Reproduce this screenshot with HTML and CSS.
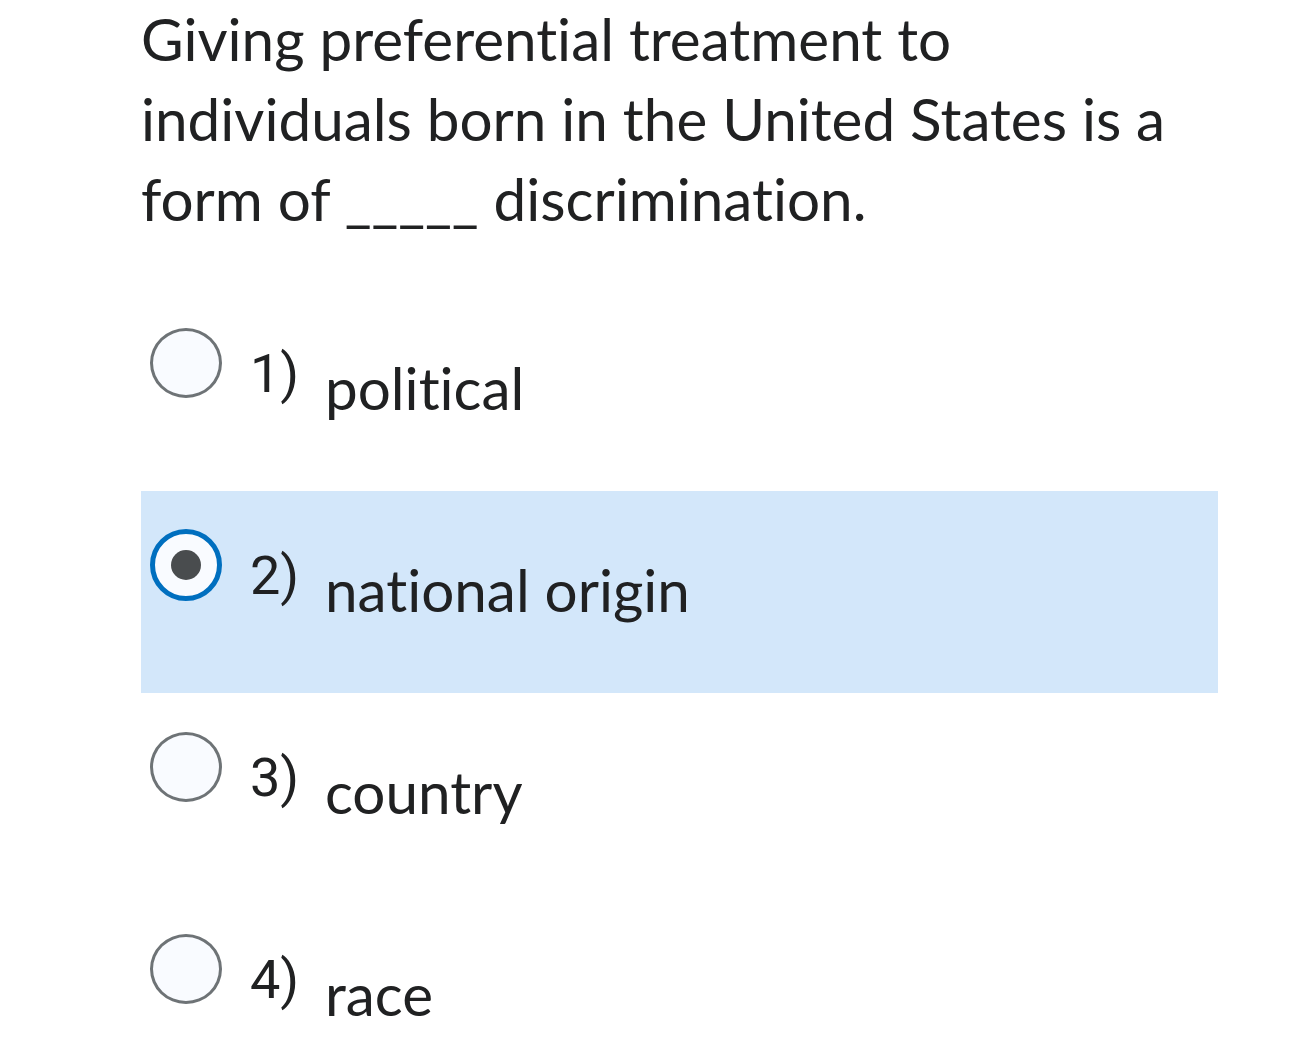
FILE: index.html
```html
<!DOCTYPE html>
<html lang="en">
<head>
<meta charset="utf-8">
<title>Question</title>
<link rel="stylesheet" href="styles.css">
</head>
<body>
<main class="quiz">
  <p class="question">Giving preferential treatment to individuals born in the United States is a form of _____ discrimination.</p>
  <div class="options">
    <label class="option">
      <span class="radio"></span>
      <span class="num">1)</span>
      <span class="answer">political</span>
    </label>
    <label class="option selected">
      <span class="radio"><span class="dot"></span></span>
      <span class="num">2)</span>
      <span class="answer">national origin</span>
    </label>
    <label class="option">
      <span class="radio"></span>
      <span class="num">3)</span>
      <span class="answer">country</span>
    </label>
    <label class="option">
      <span class="radio"></span>
      <span class="num">4)</span>
      <span class="answer">race</span>
    </label>
  </div>
</main>
</body>
</html>
```
FILE: styles.css
```css
html, body {
  margin: 0;
  padding: 0;
  background: #ffffff;
}

body {
  color: #202122;
  font-family: "Lato", "Noto Sans", sans-serif;
  font-variant-ligatures: none;
  font-feature-settings: "liga" 0, "clig" 0;
  overflow: hidden;
}

.quiz {
  margin-left: 141px;
  width: 1077px;
}

.question {
  margin: -2px 0 0 0;
  font-size: 58.4px;
  line-height: 80px;
  width: 1060px;
}

.options {
  margin-top: 51px;
  display: flex;
  flex-direction: column;
}

.option {
  display: flex;
  align-items: flex-start;
  height: 202px;
  box-sizing: border-box;
  padding-top: 39px;
  padding-left: 9px;
}

.option.selected {
  background: #d3e7fa;
}

.radio {
  flex: none;
  width: 72px;
  height: 70px;
  box-sizing: border-box;
  border: 3px solid #6e7376;
  border-radius: 50%;
  background: #f9fbff;
  display: flex;
  align-items: center;
  justify-content: center;
}

.selected .radio {
  border: 5px solid #006fbf;
  height: 72px;
  margin-top: -1px;
}

.dot {
  width: 30px;
  height: 30px;
  border-radius: 50%;
  background: #494c4e;
}

.num {
  flex: none;
  margin-left: 28px;
  margin-top: 16px;
  font-family: "Roboto", "Liberation Sans", sans-serif;
  font-size: 54px;
  line-height: 60px;
  width: 75px;
}

.answer {
  margin-top: 19px;
  font-size: 58.4px;
  line-height: 80px;
}
```
